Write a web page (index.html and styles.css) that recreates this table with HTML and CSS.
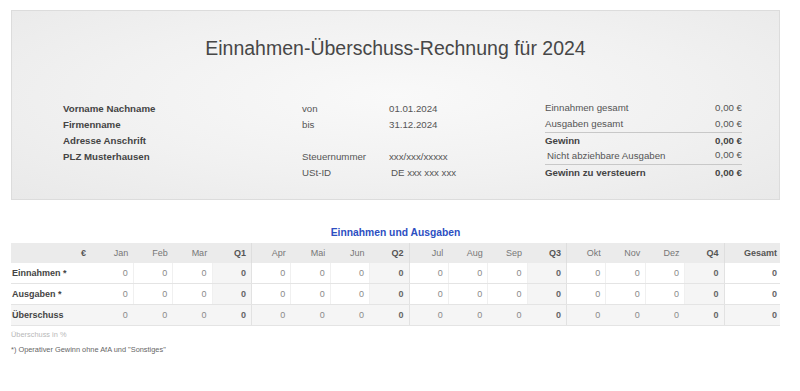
FILE: index.html
```html
<!DOCTYPE html>
<html lang="de">

<head>
    <meta charset="UTF-8">
    <meta name="viewport" content="width=device-width, initial-scale=1.0">
    <title>Einnahmen-Überschuss-Rechnung</title>
    <link rel="stylesheet" href="styles.css">
</head>

<body>
    <div class="page">
        <!-- Kopfbereich mit Adresse, Zeitraum und Summen -->
        <div class="euer-box">
            <h1 class="euer-title">Einnahmen-Überschuss-Rechnung für 2024</h1>

            <div class="euer-info">
                <div class="info-address">
                    <div>Vorname Nachname</div>
                    <div>Firmenname</div>
                    <div>Adresse Anschrift</div>
                    <div>PLZ Musterhausen</div>
                </div>

                <div class="info-period">
                    <div class="pair"><span class="key">von</span><span>01.01.2024</span></div>
                    <div class="pair"><span class="key">bis</span><span>31.12.2024</span></div>
                    <div class="pair"><span class="key">&nbsp;</span><span></span></div>
                    <div class="pair"><span class="key">Steuernummer</span><span>xxx/xxx/xxxxx</span></div>
                    <div class="pair"><span class="key">USt-ID</span><span class="indent">DE xxx xxx xxx</span></div>
                </div>

                <div class="info-sums">
                    <div class="sum"><span>Einnahmen gesamt</span><span>0,00 €</span></div>
                    <div class="sum"><span>Ausgaben gesamt</span><span>0,00 €</span></div>
                    <div class="sum strong line"><span>Gewinn</span><span>0,00 €</span></div>
                    <div class="sum raised"><span class="indent">Nicht abziehbare Ausgaben</span><span>0,00 €</span></div>
                    <div class="sum strong line"><span>Gewinn zu versteuern</span><span>0,00 €</span></div>
                </div>
            </div>
        </div>

        <!-- Monatsübersicht -->
        <h2 class="section-title">Einnahmen und Ausgaben</h2>

        <table class="months" cellspacing="0" cellpadding="0">
            <colgroup>
                <col class="col-label">
                <col span="16">
                <col class="col-total">
            </colgroup>
            <tr class="heading">
                <td class="label">€</td>
                <td>Jan</td><td>Feb</td><td>Mar</td><td class="q">Q1</td>
                <td>Apr</td><td>Mai</td><td>Jun</td><td class="q">Q2</td>
                <td>Jul</td><td>Aug</td><td>Sep</td><td class="q">Q3</td>
                <td>Okt</td><td>Nov</td><td>Dez</td><td class="q">Q4</td>
                <td class="total">Gesamt</td>
            </tr>
            <tr class="item">
                <td class="label">Einnahmen *</td>
                <td>0</td><td>0</td><td>0</td><td class="q">0</td>
                <td>0</td><td>0</td><td>0</td><td class="q">0</td>
                <td>0</td><td>0</td><td>0</td><td class="q">0</td>
                <td>0</td><td>0</td><td>0</td><td class="q">0</td>
                <td class="total">0</td>
            </tr>
            <tr class="item">
                <td class="label">Ausgaben *</td>
                <td>0</td><td>0</td><td>0</td><td class="q">0</td>
                <td>0</td><td>0</td><td>0</td><td class="q">0</td>
                <td>0</td><td>0</td><td>0</td><td class="q">0</td>
                <td>0</td><td>0</td><td>0</td><td class="q">0</td>
                <td class="total">0</td>
            </tr>
            <tr class="item result">
                <td class="label">Überschuss</td>
                <td>0</td><td>0</td><td>0</td><td class="q">0</td>
                <td>0</td><td>0</td><td>0</td><td class="q">0</td>
                <td>0</td><td>0</td><td>0</td><td class="q">0</td>
                <td>0</td><td>0</td><td>0</td><td class="q">0</td>
                <td class="total">0</td>
            </tr>
        </table>

        <p class="note muted">Überschuss in %</p>
        <p class="note">*) Operativer Gewinn ohne AfA und "Sonstiges"</p>
    </div>
</body>

</html>
```

FILE: styles.css
```css
/* EÜR Seite */
body {
    margin: 0;
    font-family: 'Liberation Sans', Arial, Helvetica, sans-serif;
    color: #555;
    background: #fff;
}

.page {
    width: 769px;
    padding: 10px 0 0 11px;
}

/* Kopfbereich */
.euer-box {
    height: 188px;
    border: 1px solid #dcdcdc;
    background: radial-gradient(ellipse at 50% 45%, #f9f9f9 0%, #f1f1f1 55%, #e9e9e9 100%);
    box-sizing: content-box;
}

.euer-title {
    margin: 25px 0 0;
    font-size: 19.5px;
    line-height: 24px;
    font-weight: normal;
    text-align: center;
    color: #474747;
}

.euer-info {
    display: flex;
    margin-top: 41px;
    padding-left: 51px;
    font-size: 9.7px;
    line-height: 16px;
}

.info-address {
    width: 239px;
    font-weight: bold;
    color: #444;
}

.info-period {
    width: 243px;
    color: #555;
}

.info-period .pair {
    display: flex;
    height: 16px;
}

.info-period .key {
    width: 87px;
}

.indent {
    padding-left: 2px;
}

.info-sums {
    width: 197px;
    margin-top: -1px;
    color: #555;
}

.info-sums .sum {
    display: flex;
    justify-content: space-between;
    height: 16px;
}

.info-sums .sum.strong {
    font-weight: bold;
    color: #444;
}

.info-sums .sum.line {
    border-top: 1px solid #c8c8c8;
    height: 15px;
}

.info-sums .sum.raised span:last-child {
    margin-top: -1px;
}

/* Monatstabelle */
.section-title {
    margin: 26px 0 0;
    font-size: 10.3px;
    line-height: 14px;
    font-weight: bold;
    text-align: center;
    color: #2d4fc2;
}

.months {
    width: 769px;
    margin-top: 3px;
    table-layout: fixed;
    border-collapse: collapse;
    font-size: 9px;
}

.months .col-label {
    width: 83px;
}

.months .col-total {
    width: 56px;
}

.months td {
    height: 20px;
    padding: 0 5px 0 0;
    text-align: right;
    color: #8a8a8a;
    border-bottom: 1px solid #e4e4e4;
    border-right: 1px solid #f0f0f0;
}

.months td.label {
    padding: 0 0 0 1px;
    text-align: left;
    font-weight: bold;
    color: #444;
    border-right: none;
}

.months tr.heading td {
    background: #ebebeb;
    color: #777;
    border-bottom: none;
    border-right: none;
}

.months tr.heading td.label {
    text-align: right;
    padding-right: 8px;
    color: #555;
}

.months td.q {
    background: #f5f5f5;
    font-weight: bold;
    color: #666;
    border-right: 1px solid #e2e2e2;
}

.months tr.heading td.q {
    background: #ebebeb;
    color: #555;
    border-right: 1px solid #dedede;
}

.months td.total {
    font-weight: bold;
    color: #666;
    padding-right: 3px;
    border-right: none;
}

.months tr.heading td.total {
    color: #555;
}

.months tr.result td {
    background: #f5f5f5;
    border-right-color: #f5f5f5;
}

.months tr.result td.q {
    border-right-color: #e2e2e2;
}

.note {
    margin: 0;
    font-size: 7.4px;
    line-height: 15px;
    color: #666;
}

.note.muted {
    margin-top: 1px;
    color: #b8b8b8;
}
```
